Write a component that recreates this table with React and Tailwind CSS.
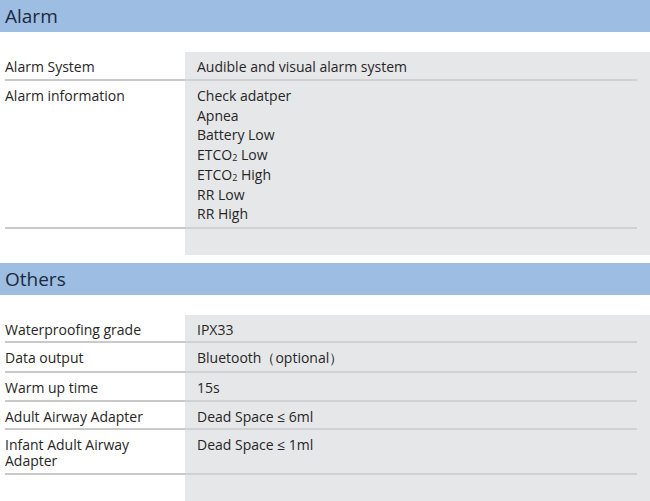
export default function App() {
  const font = { fontFamily: '"Open Sans", "Noto Sans", sans-serif' };
  const Header = ({ title }) => (
    <div className="h-[32px] bg-[#9ebde3] flex items-center pl-[5px] text-[19px] text-[#1b2a3c]">
      {title}
    </div>
  );
  const Row = ({ left, children, h }) => (
    <div className="flex" style={{ height: h }}>
      <div className="ml-[5px] w-[180px] border-b-2 border-[#c9c9c9] pt-[5px] text-[14px] leading-[20px] text-[#262626]">
        {left}
      </div>
      <div className="flex-1 bg-[#e6e7e9] pr-[13px] flex">
        <div className="flex-1 border-b-2 border-[#d0d1d3] pl-[12px] pt-[5px] text-[14px] leading-[19.7px] text-[#262626]">
          {children}
        </div>
      </div>
    </div>
  );
  const Spacer = ({ h }) => (
    <div className="flex" style={{ height: h }}>
      <div className="w-[185px]" />
      <div className="flex-1 bg-[#e6e7e9]" />
    </div>
  );
  const Sub = () => <sub className="text-[9px] relative top-[1px]">2</sub>;
  return (
    <div className="w-[650px] h-[501px] bg-white overflow-hidden" style={font}>
      <Header title="Alarm" />
      <div className="h-[20px]" />
      <Row left="Alarm System" h={29}>Audible and visual alarm system</Row>
      <Row left="Alarm information" h={148}>
        <div>Check adatper</div>
        <div>Apnea</div>
        <div>Battery Low</div>
        <div>ETCO<Sub /> Low</div>
        <div>ETCO<Sub /> High</div>
        <div>RR Low</div>
        <div>RR High</div>
      </Row>
      <Spacer h={26} />
      <div className="h-[8px]" />
      <Header title="Others" />
      <div className="h-[20px]" />
      <Row left="Waterproofing grade" h={28}>IPX33</Row>
      <Row left="Data output" h={30}>Bluetooth（optional）</Row>
      <Row left="Warm up time" h={29}>15s</Row>
      <Row left="Adult Airway Adapter" h={28}>Dead Space ≤ 6ml</Row>
      <Row
        h={45}
        left={
          <div className="leading-[16px] pt-[2px]">
            Infant Adult Airway
            <br />
            Adapter
          </div>
        }
      >
        Dead Space ≤ 1ml
      </Row>
      <Spacer h={26} />
    </div>
  );
}
